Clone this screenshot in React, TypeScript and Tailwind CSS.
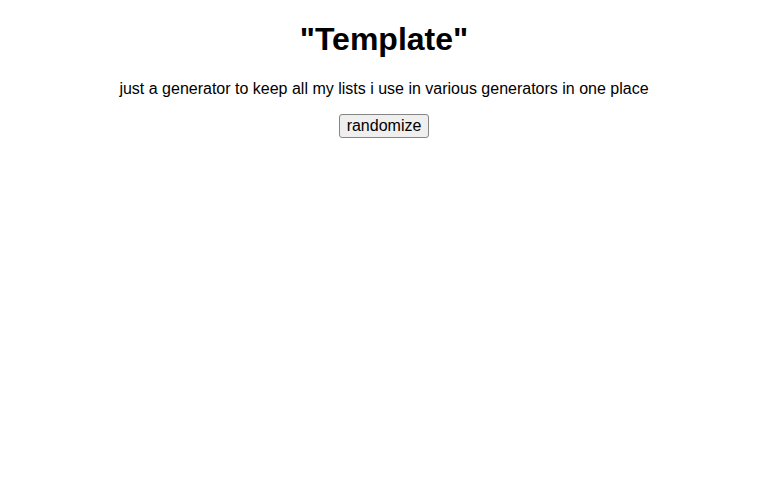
export default function App() {
  return (
    <div className="min-h-screen bg-white text-center font-['Liberation_Sans',Arial,sans-serif] text-black">
      <h1 className="pt-[21px] text-[32px] font-bold leading-[37px]">"Template"</h1>
      <p className="mt-[22px] text-base leading-[18px]">
        just a generator to keep all my lists i use in various generators in one place
      </p>
      <div className="mt-4">
        <button
          type="button"
          className="h-6 w-[90px] rounded-[3px] border border-[#858585] bg-[#efefef] text-base leading-[18px] hover:bg-[#e5e5e5]"
        >
          randomize
        </button>
      </div>
    </div>
  )
}
